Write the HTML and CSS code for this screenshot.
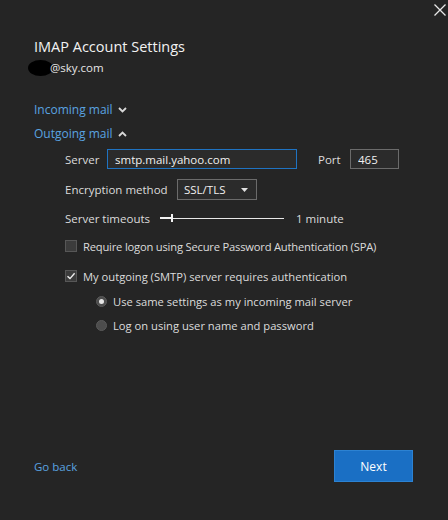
FILE: index.html
```html
<!DOCTYPE html>
<html lang="en">

<head>
    <meta charset="UTF-8">
    <title>IMAP Account Settings</title>

    <link rel="stylesheet" href="styles.css">

</head>

<body>
    <button class="luk" aria-label="Close">
        <svg width="12" height="12" viewBox="0 0 12 12">
            <path d="M0.5 0.5 L11.5 11.5 M11.5 0.5 L0.5 11.5" stroke="#e8e8e8" stroke-width="1.3" fill="none" />
        </svg>
    </button>

    <h1>IMAP Account Settings</h1>
    <p class="konto"><span class="skjult"></span>@sky.com</p>

    <a href="#" class="toggle incoming">Incoming mail
        <svg width="9" height="6" viewBox="0 0 9 6">
            <path d="M1 1 L4.5 4.5 L8 1" stroke="#d8d8d8" stroke-width="1.8" fill="none" />
        </svg>
    </a>
    <a href="#" class="toggle outgoing">Outgoing mail
        <svg width="9" height="6" viewBox="0 0 9 6">
            <path d="M1 5 L4.5 1.5 L8 5" stroke="#d8d8d8" stroke-width="1.8" fill="none" />
        </svg>
    </a>

    <section class="felter">
        <div class="raekke server">
            <label class="lbl-server">Server</label>
            <input type="text" class="input aktiv" value="smtp.mail.yahoo.com">
            <label class="lbl-port">Port</label>
            <input type="text" class="input port" value="465">
        </div>

        <div class="raekke kryptering">
            <label class="lbl-krypt">Encryption method</label>
            <div class="vaelg">SSL/TLS
                <svg width="7" height="4" viewBox="0 0 7 4">
                    <path d="M0 0 L7 0 L3.5 4 Z" fill="#e0e0e0" />
                </svg>
            </div>
        </div>

        <div class="raekke timeout">
            <label class="lbl-timeout">Server timeouts</label>
            <div class="slider">
                <span class="fyld"></span>
                <span class="knap"></span>
                <span class="spor"></span>
            </div>
            <span class="vaerdi">1 minute</span>
        </div>

        <div class="raekke check spa">
            <span class="boks"></span>
            <span>Require logon using Secure Password Authentication (SPA)</span>
        </div>

        <div class="raekke check smtp">
            <span class="boks">
                <svg width="12" height="12" viewBox="0 0 12 12">
                    <path d="M2.5 6.2 L5 8.6 L9.6 3.2" stroke="#f0f0f0" stroke-width="1.4" fill="none" />
                </svg>
            </span>
            <span>My outgoing (SMTP) server requires authentication</span>
        </div>

        <div class="raekke radio samme">
            <span class="cirkel valgt"></span>
            <span>Use same settings as my incoming mail server</span>
        </div>

        <div class="raekke radio logon">
            <span class="cirkel"></span>
            <span>Log on using user name and password</span>
        </div>
    </section>

    <footer>
        <a href="#" class="tilbage">Go back</a>
        <button class="naeste">Next</button>
    </footer>
</body></html>
```

FILE: styles.css
```css
html,
body {
    margin: 0;
    height: 520px;
    overflow: hidden;
}

body {
    background-color: #252525;
    color: #dcdcdc;
    font-family: "Open Sans", "Noto Sans", sans-serif;
    font-size: 11.5px;
    padding: 37px 0 0 34px;
    box-sizing: border-box;
    display: flex;
    flex-direction: column;
    align-items: flex-start;
    position: relative;
}

.luk {
    position: absolute;
    top: 4px;
    right: 2px;
    background: none;
    border: none;
    padding: 0;
    width: 12px;
    height: 12px;
    display: flex;
}

h1 {
    margin: 0;
    font-size: 14.5px;
    font-weight: 400;
    line-height: 20px;
    color: #f2f2f2;
}

.konto {
    margin: 2px 0 0 -6px;
    line-height: 18px;
    font-size: 11.5px;
    color: #e6e6e6;
    display: flex;
    align-items: center;
}

.skjult {
    display: inline-block;
    width: 25px;
    height: 16px;
    background-color: #000;
    border-radius: 50%;
    margin-right: -3px;
}

.toggle {
    color: #5aa3e0;
    text-decoration: none;
    line-height: 20px;
    font-size: 12px;
    display: flex;
    align-items: center;
    gap: 5px;
}

.incoming {
    margin-top: 23px;
}

.outgoing {
    margin-top: 4px;
}

.felter {
    padding-left: 31px;
    display: flex;
    flex-direction: column;
}

.raekke {
    display: flex;
    align-items: center;
    height: 20px;
}

.server {
    margin-top: 5px;
}

.lbl-server {
    width: 42px;
}

.input {
    box-sizing: border-box;
    height: 20px;
    background-color: #2b2b2b;
    border: 1px solid #6b6b6b;
    color: #f0f0f0;
    font-family: inherit;
    font-size: 11.5px;
    padding: 0 7px;
    outline: none;
}

.aktiv {
    width: 190px;
    border-color: #1f73c2;
}

.lbl-port {
    margin-left: 21px;
    width: 32px;
}

.port {
    width: 49px;
}

.kryptering {
    margin-top: 10px;
    height: 21px;
}

.lbl-krypt {
    width: 112px;
}

.vaelg {
    box-sizing: border-box;
    width: 80px;
    height: 21px;
    border: 1px solid #6b6b6b;
    background-color: #2b2b2b;
    color: #f0f0f0;
    padding: 0 8px 0 6px;
    display: flex;
    align-items: center;
    justify-content: space-between;
}

.timeout {
    margin-top: 8px;
}

.lbl-timeout {
    width: 95px;
}

.slider {
    width: 124px;
    height: 10px;
    display: flex;
    align-items: center;
}

.fyld {
    width: 11px;
    height: 2px;
    background-color: #f2f2f2;
}

.knap {
    width: 2px;
    height: 8px;
    background-color: #f2f2f2;
}

.spor {
    flex: 1;
    height: 1px;
    background-color: #e8e8e8;
}

.vaerdi {
    margin-left: 12px;
}

.check,
.radio {
    font-size: 11.2px;
}

.check {
    gap: 6px;
}

.boks {
    box-sizing: border-box;
    width: 12px;
    height: 12px;
    background-color: #3c3c3c;
    border: 1px solid #575757;
    display: flex;
    align-items: center;
    justify-content: center;
}

.boks svg {
    margin: -1px;
}

.spa {
    margin-top: 8px;
}

.spa span:last-child {
    letter-spacing: -0.2px;
}

.smtp {
    margin-top: 10px;
}

.radio {
    padding-left: 31px;
    gap: 6px;
}

.cirkel {
    box-sizing: border-box;
    width: 11px;
    height: 11px;
    border-radius: 50%;
    background-color: #4d4d4d;
    border: 1px solid #5a5a5a;
    display: flex;
    align-items: center;
    justify-content: center;
}

.cirkel.valgt::after {
    content: "";
    width: 5px;
    height: 5px;
    border-radius: 50%;
    background-color: #e6e6e6;
}

.samme {
    margin-top: 5px;
}

.logon {
    margin-top: 4px;
}

footer {
    margin-top: auto;
    margin-bottom: 38px;
    width: 379px;
    display: flex;
    align-items: center;
    justify-content: space-between;
}

.tilbage {
    color: #5aa3e0;
    text-decoration: none;
    font-size: 11.5px;
}

.naeste {
    width: 79px;
    height: 32px;
    background-color: #1a6fc4;
    border: 1px solid #2c82d2;
    color: #fff;
    font-family: inherit;
    font-size: 12px;
}
```
